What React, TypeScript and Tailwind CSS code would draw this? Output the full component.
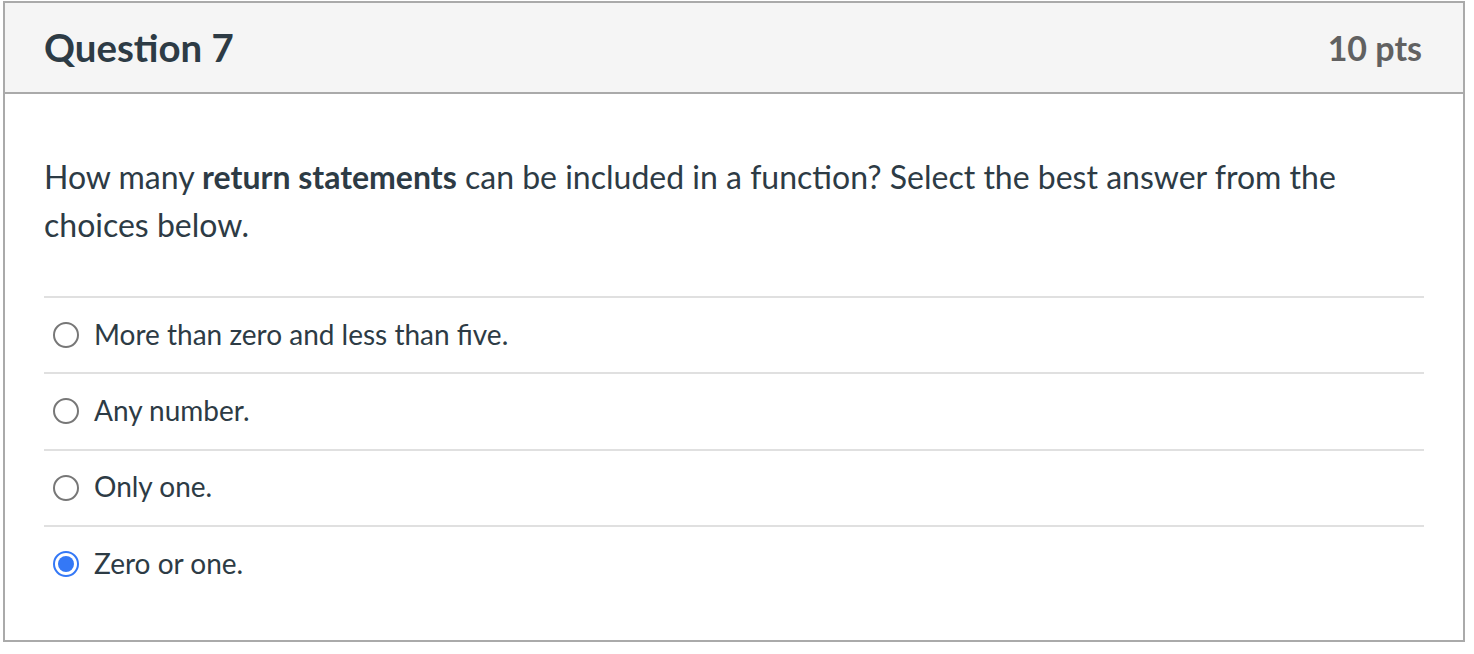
import React from "react";

const answers = [
  { text: "More than zero and less than five.", checked: false },
  { text: "Any number.", checked: false },
  { text: "Only one.", checked: false },
  { text: "Zero or one.", checked: true },
];

function Radio({ checked }: { checked: boolean }) {
  if (checked) {
    return (
      <span className="flex h-[26px] w-[26px] shrink-0 items-center justify-center rounded-full border-[2px] border-[#3478f6] bg-white">
        <span className="h-[16px] w-[16px] rounded-full bg-[#3478f6]" />
      </span>
    );
  }
  return <span className="h-[26px] w-[26px] shrink-0 rounded-full border-[2px] border-[#777] bg-white" />;
}

export default function App() {
  return (
    <div className="min-h-[654px] bg-white pl-[3px] pt-[1px]" style={{ fontFamily: "Lato, 'Open Sans', sans-serif" }}>
      <div className="h-[641px] w-[1462px] border-2 border-[#aaaaaa]">
        <div className="flex h-[91px] items-center justify-between border-b-2 border-[#aaaaaa] bg-[#f5f5f5] pl-[39px] pr-[41px]">
          <h2 className="text-[38.4px] font-bold text-[#2d3b45]">Question 7</h2>
          <span className="text-[34px] font-bold text-[#616161]">10 pts</span>
        </div>
        <div className="px-[39px] pt-[59px] text-[#2d3b45]">
          <p className="text-[32px] leading-[48px]">
            How many <strong className="font-bold">return statements</strong> can be included in a function? Select the best answer from the choices below.
          </p>
          <div className="mt-[47px]">
            {answers.map((a) => (
              <div key={a.text} className="flex h-[76.3px] items-center gap-[15px] border-t-2 border-[#e0e0e0] pl-[9px]">
                <Radio checked={a.checked} />
                <span className="pb-[3px] text-[28px] leading-[36px]">{a.text}</span>
              </div>
            ))}
          </div>
        </div>
      </div>
    </div>
  );
}
